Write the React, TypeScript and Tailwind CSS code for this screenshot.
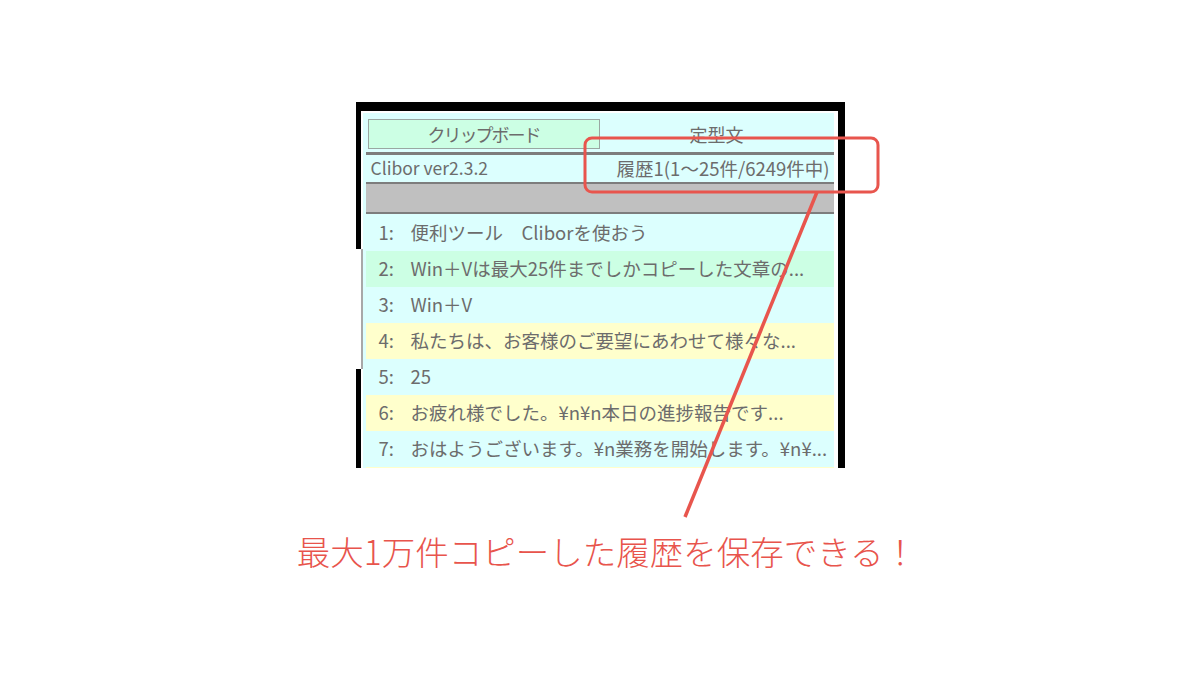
import React from 'react'

const rows = [
  { n: '1:', text: '便利ツール　Cliborを使おう', bg: 'bg-[#dcfffe]' },
  { n: '2:', text: 'Win＋Vは最大25件までしかコピーした文章の...', bg: 'bg-[#ccffe4]' },
  { n: '3:', text: 'Win＋V', bg: 'bg-[#dcfffe]' },
  { n: '4:', text: '私たちは、お客様のご要望にあわせて様々な...', bg: 'bg-[#ffffcc]' },
  { n: '5:', text: '25', bg: 'bg-[#dcfffe]' },
  { n: '6:', text: 'お疲れ様でした。¥n¥n本日の進捗報告です...', bg: 'bg-[#ffffcc]' },
  { n: '7:', text: 'おはようございます。¥n業務を開始します。¥n¥...', bg: 'bg-[#dcfffe]' },
  { n: '', text: '', bg: 'bg-[#ffffcc]' },
]

export default function App() {
  return (
    <div
      className="relative w-[1200px] h-[675px] bg-white overflow-hidden"
      style={{ fontFamily: '"Noto Sans CJK JP", "Noto Sans", sans-serif' }}
    >
      <div className="flex flex-col items-center pt-[102px]">
        {/* clibor window */}
        <div className="relative w-[489px] h-[366px] bg-black pt-[9px] pl-[5px] pr-[7px] overflow-hidden">
          <div className="h-full bg-white pt-[2px] pl-[2px] pr-[4px]">
            <div className="h-full bg-[#dcfffe] pl-[3px] text-[#6c6c6c]">
              {/* tabs */}
              <div className="flex pt-[6px]">
                <div className="ml-[2px] w-[232px] h-[30px] bg-[#ccffe4] border border-[#9aa7a2] flex items-center justify-center text-[18px] tracking-[-2px]">
                  クリップボード
                </div>
                <div className="flex-1 h-[30px] flex items-center justify-center text-[18px]">定型文</div>
              </div>
              <div className="mt-[3px] h-[3px] bg-[#7d7d7d]" />
              {/* status */}
              <div className="h-[27px] flex items-center justify-between pl-[5px] pr-[4px]">
                <span className="text-[17.5px]">Clibor ver2.3.2</span>
                <span className="text-[18.5px]">履歴1(1～25件/6249件中)</span>
              </div>
              <div className="h-[2px] bg-[#7d7d7d]" />
              <div className="h-[28px] bg-[#c0c0c0]" />
              <div className="h-[2px] bg-[#7d7d7d]" />
              <div className="h-[1px]" />
              {/* list */}
              <div className="flex flex-col">
                {rows.map((r, i) => (
                  <div key={i} className={`flex items-center h-[36px] pl-[13px] text-[18.5px] whitespace-nowrap ${r.bg}`}>
                    {r.n && <span className="w-[32px]">{r.n}</span>}
                    {r.text && <span>{r.text}</span>}
                  </div>
                ))}
              </div>
            </div>
          </div>
          {/* scroll thumb over the left border */}
          <div className="absolute left-0 top-[147px] w-[7px] h-[120px] bg-white border-r-2 border-[#a8a8a8]" />
        </div>

        <p className="mt-[66px] ml-[14px] text-[33.5px] font-light leading-none text-[#e8544c]">
          最大1万件コピーした履歴を保存できる！
        </p>
      </div>

      {/* annotation overlay */}
      <svg className="absolute left-0 top-0 pointer-events-none" width="1200" height="675">
        <rect x="585" y="138" width="293" height="54" rx="7" fill="none" stroke="#e8554d" strokeWidth="3" />
        <line x1="817" y1="192" x2="685" y2="517" stroke="#e8554d" strokeWidth="3.5" />
      </svg>
    </div>
  )
}
